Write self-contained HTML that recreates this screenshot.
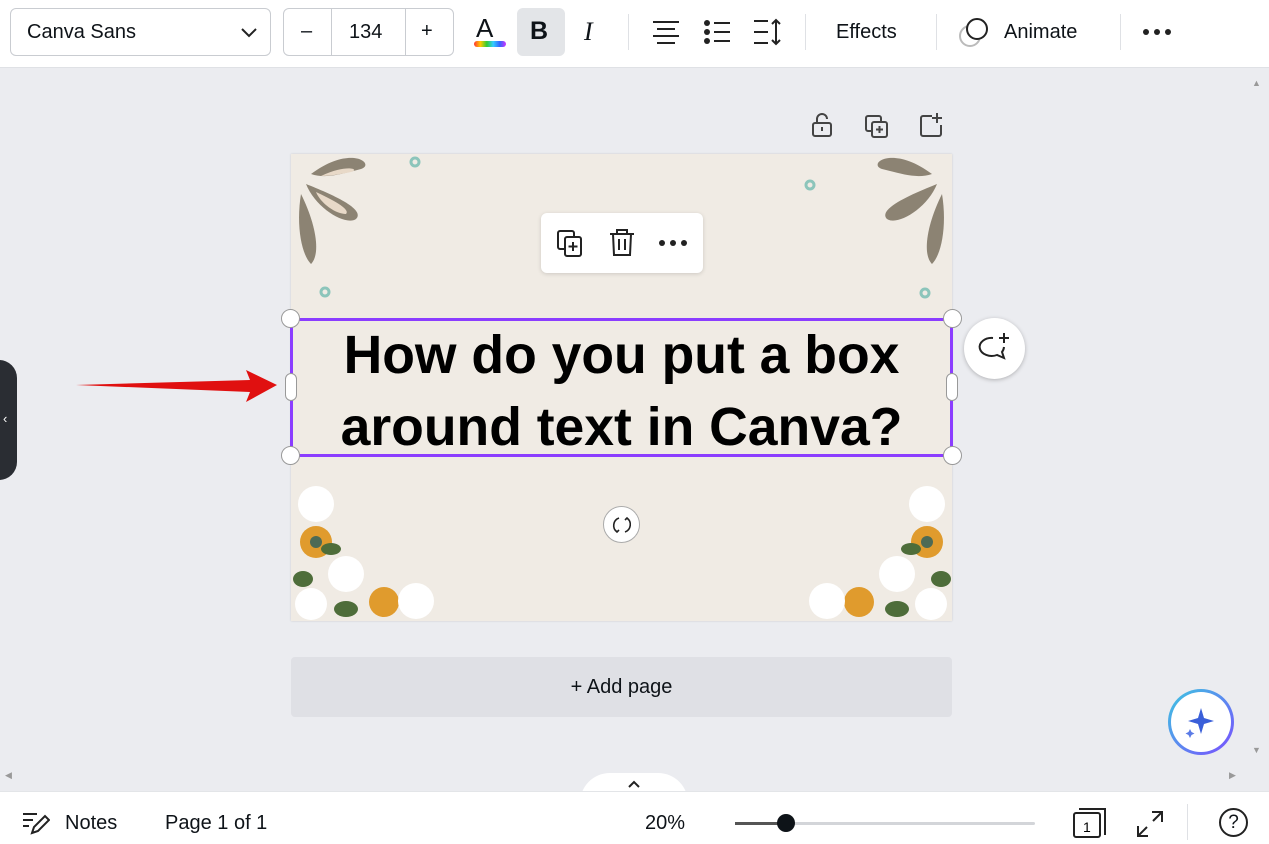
<!DOCTYPE html>
<html><head><meta charset="utf-8"><style>
*{box-sizing:border-box;margin:0;padding:0}
body{width:1269px;height:844px;overflow:hidden;background:#ebecf0;font-family:"Liberation Sans",sans-serif;position:relative;color:#0e1318}
.tb{position:absolute;left:0;top:0;width:1269px;height:68px;background:#fff;border-bottom:1px solid #dfe1e5}
.abs{position:absolute}
.box{border:1px solid #c9ccd1;border-radius:6px;background:#fff}
.t{font-size:20px;color:#0e1318}
.bot{position:absolute;left:0;top:791px;width:1269px;height:53px;background:#fff;border-top:1px solid #e3e5e8}
svg{position:absolute}
</style></head><body>
<div class="tb">
 <div class="abs box" style="left:10px;top:8px;width:261px;height:48px"></div>
 <div class="abs t" style="left:27px;top:21px">Canva Sans</div>
 <svg style="left:240px;top:26px" width="18" height="12"><path d="M2 3l7 7 7-7" fill="none" stroke="#222" stroke-width="2"/></svg>
 <div class="abs box" style="left:283px;top:8px;width:171px;height:48px"></div>
 <div class="abs" style="left:331px;top:9px;width:1px;height:46px;background:#c9ccd1"></div>
 <div class="abs" style="left:405px;top:9px;width:1px;height:46px;background:#c9ccd1"></div>
 <div class="abs t" style="left:301px;top:20px">–</div>
 <div class="abs t" style="left:349px;top:21px">134</div>
 <div class="abs t" style="left:421px;top:20px">+</div>
 <div class="abs" style="left:476px;top:13px;font-size:26px">A</div>
 <div class="abs" style="left:474px;top:41px;width:32px;height:6px;border-radius:3px;background:linear-gradient(90deg,#f33,#fc0,#3c3,#3cf,#36f,#c3f)"></div>
 <div class="abs" style="left:517px;top:8px;width:48px;height:48px;background:#e3e5e8;border-radius:6px"></div>
 <div class="abs" style="left:530px;top:17px;font-size:25px;font-weight:bold">B</div>
 <div class="abs" style="left:584px;top:17px;font-size:26px;font-style:italic;font-family:'Liberation Serif',serif">I</div>
 <div class="abs" style="left:628px;top:14px;width:1px;height:36px;background:#dfe1e5"></div>
 <svg style="left:652px;top:20px" width="28" height="24"><path d="M1 2h26M5 9h18M1 16h26M5 23h18" stroke="#222" stroke-width="2"/></svg>
 <svg style="left:703px;top:19px" width="28" height="26"><g fill="#222"><circle cx="4" cy="4" r="3"/><circle cx="4" cy="13" r="3"/><circle cx="4" cy="22" r="3"/></g><path d="M11 4h16M11 13h16M11 22h16" stroke="#222" stroke-width="2"/></svg>
 <svg style="left:753px;top:18px" width="30" height="28"><path d="M1 3h14M1 14h14M1 25h14M23 2v24M19 6l4-4 4 4M19 22l4 4 4-4" stroke="#222" stroke-width="2" fill="none"/></svg>
 <div class="abs" style="left:805px;top:14px;width:1px;height:36px;background:#dfe1e5"></div>
 <div class="abs t" style="left:836px;top:21px">Effects</div>
 <div class="abs" style="left:936px;top:14px;width:1px;height:36px;background:#dfe1e5"></div>
 <svg style="left:958px;top:16px" width="34" height="32"><circle cx="12" cy="20" r="10" fill="none" stroke="#bbb" stroke-width="2"/><circle cx="19" cy="13" r="10" fill="#fff" stroke="#222" stroke-width="2"/></svg>
 <div class="abs t" style="left:1004px;top:21px">Animate</div>
 <div class="abs" style="left:1120px;top:14px;width:1px;height:36px;background:#dfe1e5"></div>
 <svg style="left:1142px;top:28px" width="30" height="8"><g fill="#222"><circle cx="4" cy="4" r="3"/><circle cx="15" cy="4" r="3"/><circle cx="26" cy="4" r="3"/></g></svg>
</div>
<div class="abs" style="left:1245px;top:69px;width:24px;height:697px;background:#ebecf0"></div>
<div class="abs" style="left:1252px;top:78px;font-size:9px;color:#999">▲</div>
<div class="abs" style="left:1252px;top:745px;font-size:9px;color:#999">▼</div>
<div class="abs" style="left:0;top:766px;width:1245px;height:22px;background:#ebecf0"></div>
<div class="abs" style="left:5px;top:770px;font-size:9px;color:#999">◀</div>
<div class="abs" style="left:1229px;top:770px;font-size:9px;color:#999">▶</div>
<div class="abs" style="left:-20px;top:360px;width:37px;height:120px;background:#2a2d33;border-radius:18px"></div>
<div class="abs" style="left:3px;top:411px;color:#fff;font-size:13px">‹</div>
<svg style="left:810px;top:112px" width="24" height="26"><rect x="3" y="11" width="18" height="13" rx="2" fill="none" stroke="#444" stroke-width="2"/><path d="M7 11V7a5 5 0 0 1 10 0" fill="none" stroke="#444" stroke-width="2"/><path d="M12 15v4" stroke="#444" stroke-width="2"/></svg>
<svg style="left:864px;top:114px" width="26" height="26"><rect x="2" y="2" width="15" height="15" rx="2" fill="none" stroke="#444" stroke-width="2"/><rect x="8" y="8" width="15" height="15" rx="2" fill="#ebecf0" stroke="#444" stroke-width="2"/><path d="M15.5 12v7M12 15.5h7" stroke="#444" stroke-width="2"/></svg>
<svg style="left:918px;top:112px" width="26" height="26"><path d="M14 4H5a2 2 0 0 0-2 2v16a2 2 0 0 0 2 2h16a2 2 0 0 0 2-2v-9" fill="none" stroke="#444" stroke-width="2"/><path d="M19 1v10M14 6h10" stroke="#444" stroke-width="2"/></svg>
<div class="abs" style="left:291px;top:154px;width:661px;height:467px;background:#f0ebe4;box-shadow:0 0 2px rgba(0,0,0,.15)"></div>
<svg style="left:291px;top:154px" width="661" height="467">
 <g fill="#8c8373"><path d="M20 20 C60 -10 85 10 70 15 C50 20 35 25 20 20Z"/><path d="M15 30 C40 40 75 55 65 65 C55 72 25 55 15 30Z"/><path d="M10 40 C25 70 30 100 20 110 C10 100 5 70 10 40Z"/></g>
 <g fill="#e8d9c8"><path d="M30 22 C55 10 70 15 60 18 C50 20 40 22 30 22Z"/><path d="M25 38 C40 45 60 55 55 60 C45 60 30 50 25 38Z"/></g>
 <g transform="translate(661,0) scale(-1,1)" fill="#8c8373"><path d="M20 20 C60 -10 85 10 70 15 C50 20 35 25 20 20Z"/><path d="M15 30 C40 40 75 55 65 65 C55 72 25 55 15 30Z"/><path d="M10 40 C25 70 30 100 20 110 C10 100 5 70 10 40Z"/></g>
 <g fill="none" stroke="#8cc5bb" stroke-width="3"><circle cx="124" cy="8" r="4"/><circle cx="34" cy="138" r="4"/><circle cx="519" cy="31" r="4"/><circle cx="634" cy="139" r="4"/></g>
 <g>
  <circle cx="25" cy="350" r="18" fill="#fff"/><circle cx="25" cy="388" r="16" fill="#e09b2d"/><circle cx="25" cy="388" r="6" fill="#4d6a55"/>
  <circle cx="55" cy="420" r="18" fill="#fff"/><circle cx="20" cy="450" r="16" fill="#fff"/><circle cx="93" cy="448" r="15" fill="#e09b2d"/><circle cx="125" cy="447" r="18" fill="#fff"/>
  <ellipse cx="55" cy="455" rx="12" ry="8" fill="#4e6d3a"/><ellipse cx="12" cy="425" rx="10" ry="8" fill="#4e6d3a"/><ellipse cx="40" cy="395" rx="10" ry="6" fill="#4e6d3a"/>
  <circle cx="636" cy="350" r="18" fill="#fff"/><circle cx="636" cy="388" r="16" fill="#e09b2d"/><circle cx="636" cy="388" r="6" fill="#4d6a55"/>
  <circle cx="606" cy="420" r="18" fill="#fff"/><circle cx="640" cy="450" r="16" fill="#fff"/><circle cx="568" cy="448" r="15" fill="#e09b2d"/><circle cx="536" cy="447" r="18" fill="#fff"/>
  <ellipse cx="606" cy="455" rx="12" ry="8" fill="#4e6d3a"/><ellipse cx="650" cy="425" rx="10" ry="8" fill="#4e6d3a"/><ellipse cx="620" cy="395" rx="10" ry="6" fill="#4e6d3a"/>
 </g>
</svg>
<div class="abs" style="left:541px;top:213px;width:162px;height:60px;background:#fff;border-radius:6px;box-shadow:0 1px 4px rgba(0,0,0,.15)"></div>
<svg style="left:556px;top:229px" width="30" height="30"><rect x="2" y="2" width="16" height="18" rx="2" fill="none" stroke="#222" stroke-width="2"/><rect x="9" y="8" width="16" height="19" rx="2" fill="#fff" stroke="#222" stroke-width="2"/><path d="M17 13v9M12.5 17.5h9" stroke="#222" stroke-width="2"/></svg>
<svg style="left:608px;top:228px" width="28" height="30"><path d="M2 6h24M9 6V2h10v4M5 6l1 21h16l1-21M11 11v11M17 11v11" fill="none" stroke="#222" stroke-width="2"/></svg>
<svg style="left:658px;top:239px" width="30" height="8"><g fill="#222"><circle cx="4" cy="4" r="3"/><circle cx="15" cy="4" r="3"/><circle cx="26" cy="4" r="3"/></g></svg>
<div class="abs" style="left:290px;top:318px;width:663px;height:139px;border:3px solid #8b3dff"></div>
<div class="abs" style="left:290px;top:320px;width:663px;text-align:center;font-size:53.5px;font-weight:bold;line-height:72px;color:#000;white-space:nowrap">How do you put a box<br>around text in Canva?</div>
<div class="abs" style="left:281px;top:309px;width:19px;height:19px;border-radius:50%;background:#fff;border:1px solid #999"></div>
<div class="abs" style="left:943px;top:309px;width:19px;height:19px;border-radius:50%;background:#fff;border:1px solid #999"></div>
<div class="abs" style="left:281px;top:446px;width:19px;height:19px;border-radius:50%;background:#fff;border:1px solid #999"></div>
<div class="abs" style="left:943px;top:446px;width:19px;height:19px;border-radius:50%;background:#fff;border:1px solid #999"></div>
<div class="abs" style="left:285px;top:373px;width:12px;height:28px;border-radius:6px;background:#fff;border:1px solid #999"></div>
<div class="abs" style="left:946px;top:373px;width:12px;height:28px;border-radius:6px;background:#fff;border:1px solid #999"></div>
<div class="abs" style="left:603px;top:506px;width:37px;height:37px;border-radius:50%;background:#fff;border:1px solid #aaa"></div>
<svg style="left:611px;top:514px" width="22" height="22"><path d="M8 4a8 8 0 0 0-2 14M14 18a8 8 0 0 0 2-14M4 16l2 2 2-2M14 6l2-2 2 2" fill="none" stroke="#222" stroke-width="1.6"/></svg>
<div class="abs" style="left:964px;top:318px;width:61px;height:61px;border-radius:50%;background:#fff;box-shadow:0 1px 4px rgba(0,0,0,.25)"></div>
<svg style="left:977px;top:332px" width="34" height="32"><path d="M16 6a12 9 0 1 0 4 17l7 3-2-6a9 9 0 0 0 2-5" fill="none" stroke="#222" stroke-width="2"/><path d="M27 1v10M22 6h10" stroke="#222" stroke-width="2"/></svg>
<svg style="left:70px;top:365px" width="215" height="42"><path d="M6 20 L180 15 L176 5 L207 20 L176 37 L180 27 Z" fill="#e01010"/></svg>
<div class="abs" style="left:291px;top:657px;width:661px;height:60px;background:#dfe0e5;border-radius:4px;text-align:center;line-height:60px;font-size:20px">+ Add page</div>
<div class="abs" style="left:1168px;top:689px;width:66px;height:66px;border-radius:50%;background:linear-gradient(135deg,#3cc7e0,#7a4dff);"></div>
<div class="abs" style="left:1171px;top:692px;width:60px;height:60px;border-radius:50%;background:#fff"></div>
<svg style="left:1183px;top:705px" width="36" height="34"><path d="M18 3 L21 13 L31 16 L21 19 L18 29 L15 19 L5 16 L15 13Z" fill="#3a5fd9"/><path d="M7 24 l1.5 3 3 1.5-3 1.5-1.5 3-1.5-3-3-1.5 3-1.5z" fill="#5b7be6"/></svg>
<div class="abs" style="left:580px;top:773px;width:108px;height:30px;background:#fff;border-radius:30px 30px 0 0"></div>
<svg style="left:627px;top:780px" width="14" height="10"><path d="M2 7l5-5 5 5" fill="none" stroke="#222" stroke-width="2"/></svg>
<div class="bot">
 <svg style="left:22px;top:20px" width="28" height="24"><path d="M1 2h14M1 8h10M1 14h6" stroke="#222" stroke-width="2"/><path d="M10 21l2-6L23 4l4 4-11 11z" fill="none" stroke="#222" stroke-width="2"/></svg>
 <div class="abs t" style="left:65px;top:20px">Notes</div>
 <div class="abs t" style="left:165px;top:20px">Page 1 of 1</div>
 <div class="abs t" style="left:645px;top:20px">20%</div>
 <div class="abs" style="left:735px;top:30px;width:300px;height:3px;background:#d3d5d9;border-radius:2px"></div>
 <div class="abs" style="left:735px;top:30px;width:50px;height:3px;background:#555"></div>
 <div class="abs" style="left:777px;top:22px;width:18px;height:18px;border-radius:50%;background:#0e1318"></div>
 <svg style="left:1071px;top:13px" width="36" height="34"><path d="M8 4h26v26" fill="none" stroke="#222" stroke-width="2"/><rect x="3" y="8" width="26" height="24" rx="2" fill="#fff" stroke="#222" stroke-width="2"/><text x="12" y="27" font-size="14" font-family="Liberation Sans">1</text></svg>
 <svg style="left:1136px;top:18px" width="28" height="28"><path d="M16 2h10v10M26 2l-9 9M12 26H2V16M2 26l9-9" fill="none" stroke="#222" stroke-width="2"/></svg>
 <div class="abs" style="left:1187px;top:12px;width:1px;height:36px;background:#dfe1e5"></div>
 <div class="abs" style="left:1219px;top:16px;width:29px;height:29px;border-radius:50%;border:2px solid #222;text-align:center;font-size:19px;line-height:25px">?</div>
</div>
</body></html>
